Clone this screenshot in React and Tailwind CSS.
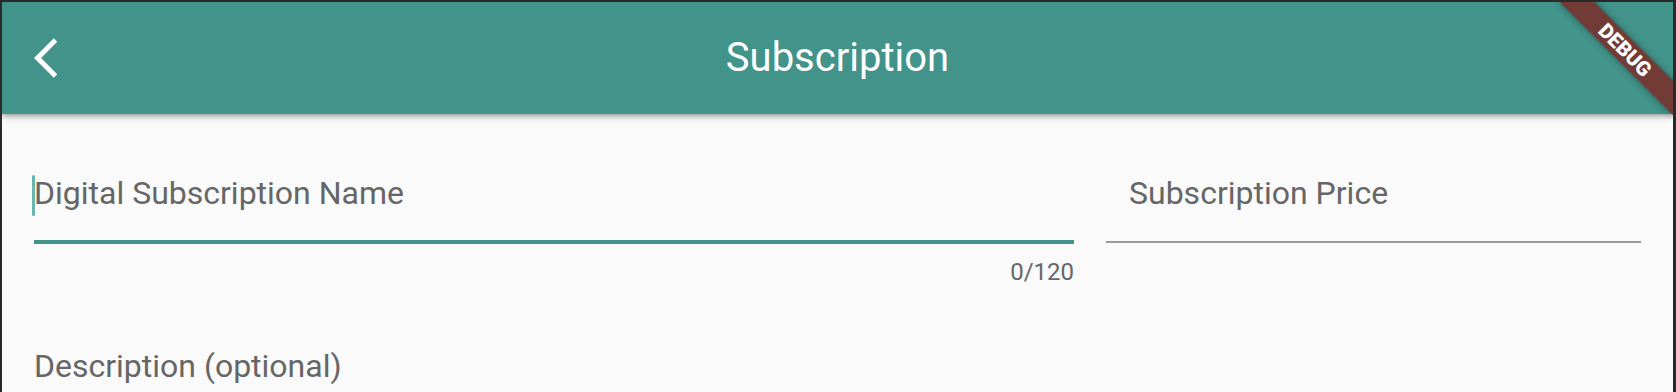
import React from "react";

function BackIcon() {
  return (
    <svg width="23.34" height="48" viewBox="0 0 11.67 24" className="fill-white">
      <path d="M11.67 3.87L9.9 2.1 0 12l9.9 9.9 1.77-1.77L3.54 12z" />
    </svg>
  );
}

function App() {
  return (
    <div className="w-full h-[392px] bg-[#2a2a2a] pt-[2px] pl-[2px] pr-[3px] font-['Roboto',sans-serif]">
      <div className="relative h-full bg-[#fafafa] overflow-hidden">
        {/* app bar */}
        <div className="relative z-10 h-[112px] bg-[#42938a] grid grid-cols-[1fr_auto_1fr] items-center shadow-[0_2px_4px_-1px_rgba(0,0,0,0.2),0_4px_5px_0_rgba(0,0,0,0.14),0_1px_10px_0_rgba(0,0,0,0.12)]">
          <div className="pl-[32px] flex items-center">
            <BackIcon />
          </div>
          <h1 className="text-[40px] leading-[48px] text-white">Subscription</h1>
          <div />
        </div>

        {/* form */}
        <div className="px-[32px] pt-[55px]">
          <div className="flex gap-[32px]">
            <div className="w-[1040px] relative">
              <div className="absolute left-[-2px] top-[6px] w-[3px] h-[41px] rounded-[2px] bg-[#6bb5ad]" />
              <p className="text-[32px] leading-[48px] text-[#666666]">Digital Subscription Name</p>
              <div className="mt-[23px] h-[4px] bg-[#42938a]" />
              <p className="mt-[12px] text-right text-[24px] leading-[32px] text-[#666666]">0/120</p>
            </div>
            <div className="flex-1">
              <p className="pl-[23px] text-[32px] leading-[48px] text-[#666666]">Subscription Price</p>
              <div className="mt-[24px] h-[2px] bg-[#9a9a9a]" />
            </div>
          </div>
          <p className="mt-[54px] text-[32px] leading-[48px] text-[#666666]">Description (optional)</p>
        </div>

        {/* debug banner */}
        <div className="absolute z-20 top-[36px] right-[-32px] w-[160px] h-[24px] rotate-45 bg-[#733b35] shadow-[0_0_6px_rgba(0,0,0,0.45)] flex items-center justify-center">
          <span className="text-[20.4px] leading-none font-black text-white">DEBUG</span>
        </div>
      </div>
    </div>
  );
}

export default App;
